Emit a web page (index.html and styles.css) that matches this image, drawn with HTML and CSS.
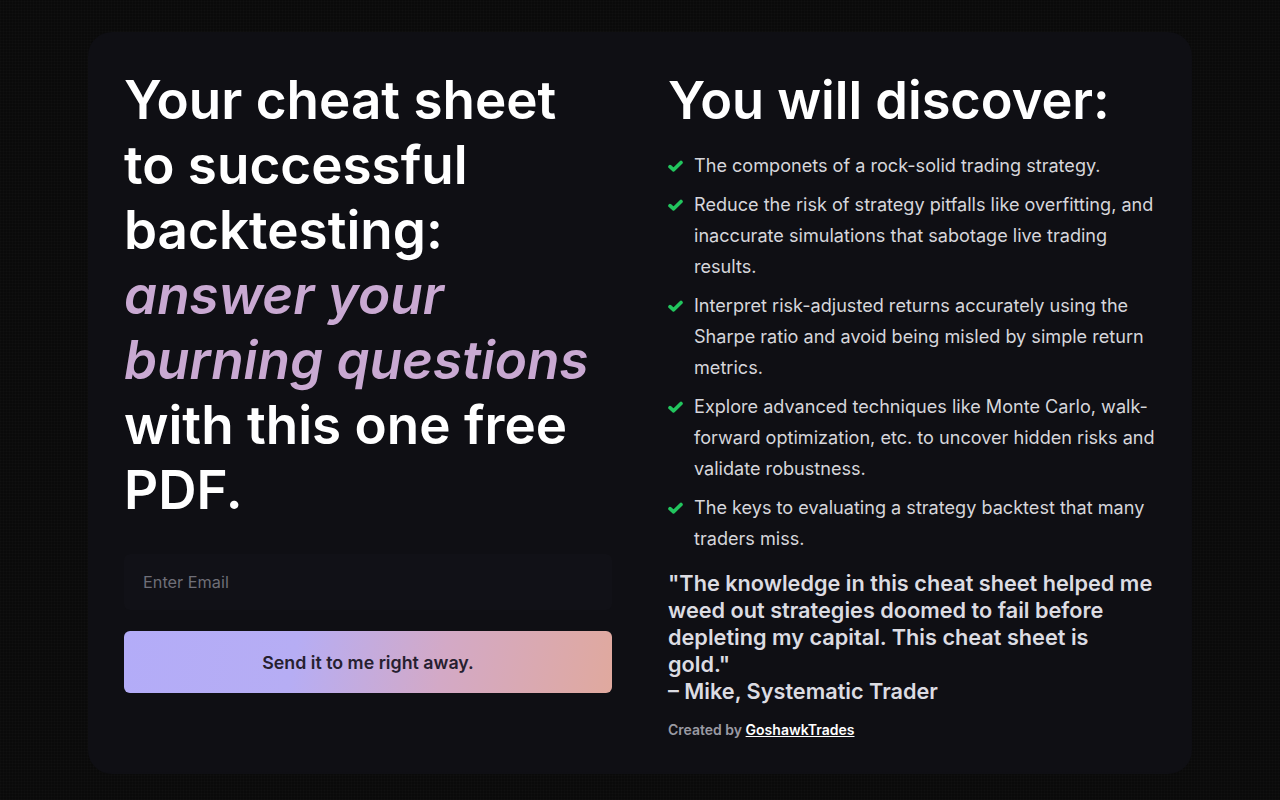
FILE: index.html
```html
<!DOCTYPE html>
<html lang="en">
<head>
<meta charset="utf-8">
<title>Backtesting Cheat Sheet</title>
<link rel="stylesheet" href="styles.css">
</head>
<body>
<main class="card">
  <section class="col left">
    <h1 class="title">Your cheat sheet to successful backtesting: <em class="accent">answer your burning questions</em> with this one free PDF.</h1>
    <form class="form">
      <input class="email" type="email" placeholder="Enter Email">
      <button class="send" type="button">Send it to me right away.</button>
    </form>
  </section>
  <section class="col right">
    <h2 class="subtitle">You will discover:</h2>
    <ul class="list">
      <li class="item"><svg class="check" viewBox="0 0 15 12"><path d="M2 6.6 L5.6 9.8 L13 2.4" /></svg><span>The componets of a rock-solid trading strategy.</span></li>
      <li class="item"><svg class="check" viewBox="0 0 15 12"><path d="M2 6.6 L5.6 9.8 L13 2.4" /></svg><span>Reduce the risk of strategy pitfalls like overfitting, and inaccurate simulations that sabotage live trading results.</span></li>
      <li class="item"><svg class="check" viewBox="0 0 15 12"><path d="M2 6.6 L5.6 9.8 L13 2.4" /></svg><span>Interpret risk-adjusted returns accurately using the Sharpe ratio and avoid being misled by simple return metrics.</span></li>
      <li class="item"><svg class="check" viewBox="0 0 15 12"><path d="M2 6.6 L5.6 9.8 L13 2.4" /></svg><span>Explore advanced techniques like Monte Carlo, walk-forward optimization, etc. to uncover hidden risks and validate robustness.</span></li>
      <li class="item"><svg class="check" viewBox="0 0 15 12"><path d="M2 6.6 L5.6 9.8 L13 2.4" /></svg><span>The keys to evaluating a strategy backtest that many traders miss.</span></li>
    </ul>
    <blockquote class="quote">"The knowledge in this cheat sheet helped me weed out strategies doomed to fail before depleting my capital. This cheat sheet is gold."<br>– Mike, Systematic Trader</blockquote>
    <p class="credit">Created by <a class="credit-link" href="#">GoshawkTrades</a></p>
  </section>
</main>
</body>
</html>
```

FILE: styles.css
```css
* { box-sizing: border-box; }
html, body { margin: 0; padding: 0; }
body {
  background-color: #0a0a0a;
  background-image: repeating-linear-gradient(0deg, rgba(255,255,255,0.012) 0 1px, transparent 1px 3px),
                    repeating-linear-gradient(90deg, rgba(255,255,255,0.012) 0 1px, transparent 1px 3px);
  font-family: Inter, "Noto Sans", sans-serif;
  min-height: 800px;
  padding: 32px 0 26px;
}
.card {
  width: 1104px;
  margin: 0 auto;
  background: #0f0f14;
  border-radius: 24px;
  padding: 36px;
  display: grid;
  grid-template-columns: 1fr 1fr;
  column-gap: 56px;
  min-height: 742px;
}
.col { display: flex; flex-direction: column; }
.title {
  margin: 0;
  max-width: 472px;
  font-size: 53px;
  line-height: 65px;
  font-weight: 600;
  color: #ffffff;
}
.accent { font-style: italic; color: #c9a9d2; }
.form { margin-top: 31px; display: flex; flex-direction: column; gap: 21px; }
.email {
  height: 56px;
  background: #111117;
  border: none;
  border-radius: 6px;
  padding: 0 19px;
  font-family: inherit;
  font-size: 16.3px;
  color: #e4e4e7;
  outline: none;
}
.email::placeholder { color: #6f6f78; }
.send {
  height: 62px;
  border: none;
  border-radius: 6px;
  background: linear-gradient(100deg, #b3acf8 0%, #b6adf4 35%, #d3a9c6 65%, #e0a99e 100%);
  font-family: inherit;
  font-size: 17.8px;
  font-weight: 600;
  color: #26202f;
}
.subtitle {
  margin: 0;
  font-size: 52.3px;
  line-height: 65px;
  font-weight: 600;
  color: #ffffff;
}
.list { list-style: none; margin: 17px 0 0; padding: 0; display: flex; flex-direction: column; gap: 8px; }
.item {
  display: flex;
  align-items: flex-start;
  gap: 11px;
  font-size: 18.1px;
  line-height: 31px;
  color: #d6d6db;
}
.check {
  flex: none;
  width: 15px;
  height: 12px;
  margin-top: 10px;
  fill: none;
  stroke: #22c55e;
  stroke-width: 3.6;
  stroke-linecap: round;
  stroke-linejoin: round;
}
.quote {
  margin: 16px 0 0;
  font-size: 21.7px;
  line-height: 27px;
  font-weight: 600;
  color: #dcdce2;
}
.credit {
  margin: 16px 0 0;
  font-size: 14px;
  font-weight: 600;
  color: #9a9aa3;
}
.credit-link { color: #ffffff; text-decoration: underline; }
```
